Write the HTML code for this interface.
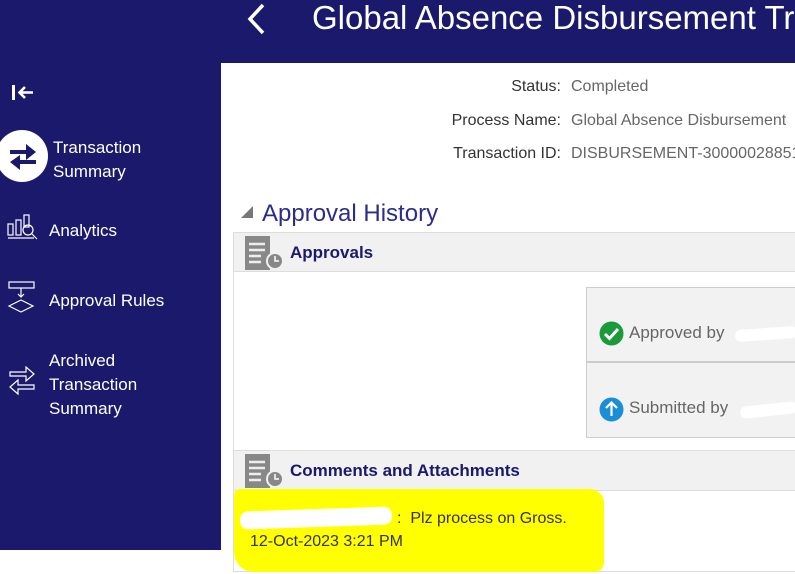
<!DOCTYPE html>
<html><head><meta charset="utf-8"><style>
*{margin:0;padding:0;box-sizing:border-box}
body{width:795px;height:574px;overflow:hidden;background:#fff;font-family:"Liberation Sans",sans-serif;position:relative}
.a{position:absolute}
.nav{background:#1b196b}
.w{color:#fff;font-size:17px;line-height:24px}
.lab{color:#333;font-size:16px;text-align:right;width:200px;left:361px}
.val{color:#666;font-size:16px;left:571px;white-space:nowrap}
</style></head><body>
<div class="a nav" style="left:0;top:0;width:795px;height:63px"></div>
<div class="a nav" style="left:0;top:63px;width:221px;height:487px"></div>
<svg class="a" style="left:244px;top:2px" width="24" height="34"><path d="M19 3 L6 17 L19 31" stroke="#fff" stroke-width="3.5" fill="none"/></svg>
<div class="a" style="left:312px;top:-2px;color:#fff;font-size:33px;white-space:nowrap;line-height:40px">Global Absence Disbursement Tr</div>
<svg class="a" style="left:11px;top:84px" width="24" height="18"><rect x="1" y="1" width="3" height="15" fill="#fff"/><path d="M22 8.5H9M14 3L8.5 8.5 14 14" stroke="#fff" stroke-width="2.6" fill="none"/></svg>
<div class="a" style="left:-4px;top:130px;width:52px;height:52px;border-radius:50%;background:#fff"></div>
<svg class="a" style="left:8px;top:143px" width="30" height="28"><path d="M2 7h16v-6l10 8-10 8v-6H2z M28 17H12v-5L2 19l10 8v-6h16z" fill="#1b196b"/></svg>
<div class="a w" style="left:53px;top:136px">Transaction<br>Summary</div>
<svg class="a" style="left:7px;top:214px" width="34" height="26" fill="none" stroke="#fff" stroke-width="1.2"><rect x="1" y="10" width="5" height="11"/><rect x="9" y="6" width="5" height="15"/><rect x="17" y="1" width="5" height="12"/><circle cx="21" cy="16" r="5"/><path d="M25 20l5 5M1 24h26"/></svg>
<div class="a w" style="left:49px;top:219px">Analytics</div>
<svg class="a" style="left:7px;top:281px" width="30" height="34" fill="none" stroke="#fff" stroke-width="1.2"><rect x="2" y="1" width="25" height="6"/><path d="M14 7v9M11 13l3 3 3-3M2 25l12-6 12 6-12 6z"/></svg>
<div class="a w" style="left:49px;top:289px">Approval Rules</div>
<svg class="a" style="left:8px;top:366px" width="28" height="30" fill="none" stroke="#fff" stroke-width="1.2"><path d="M2 6h16V1l8 7-8 7v-5H2zM26 19H10v-5L2 21l8 7v-5h16z"/></svg>
<div class="a w" style="left:49px;top:349px">Archived<br>Transaction<br>Summary</div>
<div class="a lab" style="top:78px">Status:</div><div class="a val" style="top:78px">Completed</div>
<div class="a lab" style="top:112px">Process Name:</div><div class="a val" style="top:112px">Global Absence Disbursement</div>
<div class="a lab" style="top:145px">Transaction ID:</div><div class="a val" style="top:145px">DISBURSEMENT-300000288511</div>
<svg class="a" style="left:240px;top:205px" width="14" height="14"><path d="M13 1V13H1z" fill="#777"/></svg>
<div class="a" style="left:262px;top:200px;font-size:24px;color:#2c2c8c;white-space:nowrap">Approval History</div>
<div class="a" style="left:233px;top:232px;width:570px;height:340px;border:1px solid #ddd;background:#fff"></div>
<div class="a" style="left:233px;top:232px;width:570px;height:40px;background:#f1f1f1;border:1px solid #ddd"></div>
<div class="a" style="left:233px;top:450px;width:570px;height:41px;background:#f1f1f1;border:1px solid #ddd"></div>
<svg class="a" style="left:244px;top:235px" width="40" height="36"><rect x="1" y="1" width="25" height="34" fill="#888"/><path d="M5 9h16M5 15h16M5 21h12M5 27h12" stroke="#eee" stroke-width="2.5"/><circle cx="31" cy="26" r="8" fill="#888" stroke="#f1f1f1" stroke-width="2"/><path d="M31 21v5h4" stroke="#fff" stroke-width="1.5" fill="none"/></svg>
<div class="a" style="left:290px;top:243px;font-size:17px;font-weight:bold;color:#1b196b">Approvals</div>
<svg class="a" style="left:244px;top:453px" width="40" height="36"><rect x="1" y="1" width="25" height="34" fill="#888"/><path d="M5 9h16M5 15h16M5 21h12M5 27h12" stroke="#eee" stroke-width="2.5"/><circle cx="31" cy="26" r="8" fill="#888" stroke="#f1f1f1" stroke-width="2"/><path d="M31 21v5h4" stroke="#fff" stroke-width="1.5" fill="none"/></svg>
<div class="a" style="left:290px;top:461px;font-size:17px;font-weight:bold;color:#1b196b;white-space:nowrap">Comments and Attachments</div>
<div class="a" style="left:586px;top:287px;width:215px;height:151px;background:#f2f2f2;border:1px solid #ccc"></div>
<div class="a" style="left:586px;top:361px;width:215px;height:2px;background:#ccc"></div>
<svg class="a" style="left:599px;top:321px" width="25" height="25"><circle cx="12.5" cy="12.5" r="12" fill="#1a9a3a"/><path d="M6 13l4.5 4.5L19 8" stroke="#fff" stroke-width="3" fill="none"/></svg>
<div class="a" style="left:629px;top:323px;font-size:17px;color:#666;white-space:nowrap">Approved by</div>
<svg class="a" style="left:599px;top:397px" width="25" height="25"><circle cx="12.5" cy="12.5" r="12" fill="#1a8fd8"/><path d="M12.5 19V6M7 11l5.5-5.5L18 11" stroke="#fff" stroke-width="2.2" fill="none"/></svg>
<div class="a" style="left:629px;top:398px;font-size:17px;color:#666;white-space:nowrap">Submitted by</div>
<div class="a" style="left:735px;top:328px;width:62px;height:12px;background:#fff;border-radius:6px;transform:rotate(-4deg)"></div>
<div class="a" style="left:740px;top:404px;width:57px;height:12px;background:#fff;border-radius:6px;transform:rotate(-6deg)"></div>
<div class="a" style="left:234px;top:489px;width:370px;height:83px;background:#ffff00;border-radius:6px 14px 10px 20px"></div>
<div class="a" style="left:240px;top:509px;width:152px;height:18px;background:#fff;border-radius:8px;transform:rotate(-2deg)"></div>
<div class="a" style="left:397px;top:510px;font-size:16px;color:#333;white-space:nowrap">:&nbsp; Plz process on Gross.</div>
<div class="a" style="left:250px;top:533px;font-size:16px;color:#333;white-space:nowrap">12-Oct-2023 3:21 PM</div>
</body></html>
